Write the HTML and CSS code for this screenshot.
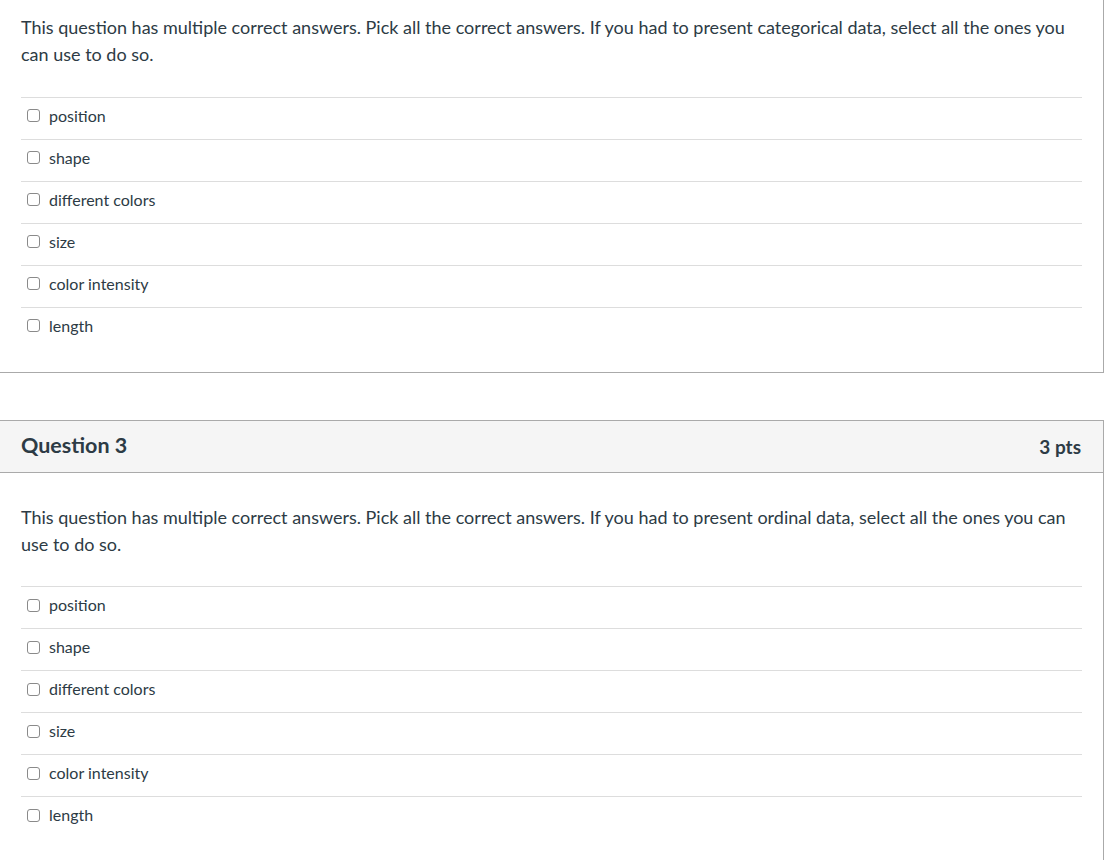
FILE: index.html
```html
<!DOCTYPE html>
<html lang="en">
<head>
<meta charset="utf-8">
<title>Quiz</title>
<link rel="stylesheet" href="styles.css">
</head>
<body>
<div class="page">
  <section class="question question--continued">
    <div class="question-body">
      <p class="question-text">This question has multiple correct answers. Pick all the correct answers. If you had to present categorical data, select all the ones you can use to do so.</p>
      <ul class="answers">
        <li class="answer"><span class="box"></span><span class="label">position</span></li>
        <li class="answer"><span class="box"></span><span class="label">shape</span></li>
        <li class="answer"><span class="box"></span><span class="label">different colors</span></li>
        <li class="answer"><span class="box"></span><span class="label">size</span></li>
        <li class="answer"><span class="box"></span><span class="label">color intensity</span></li>
        <li class="answer"><span class="box"></span><span class="label">length</span></li>
      </ul>
    </div>
  </section>

  <section class="question">
    <header class="question-header">
      <h2 class="question-name">Question 3</h2>
      <span class="question-points">3 pts</span>
    </header>
    <div class="question-body">
      <p class="question-text">This question has multiple correct answers. Pick all the correct answers. If you had to present ordinal data, select all the ones you can use to do so.</p>
      <ul class="answers">
        <li class="answer"><span class="box"></span><span class="label">position</span></li>
        <li class="answer"><span class="box"></span><span class="label">shape</span></li>
        <li class="answer"><span class="box"></span><span class="label">different colors</span></li>
        <li class="answer"><span class="box"></span><span class="label">size</span></li>
        <li class="answer"><span class="box"></span><span class="label">color intensity</span></li>
        <li class="answer"><span class="box"></span><span class="label">length</span></li>
      </ul>
    </div>
  </section>
</div>
</body>
</html>
```

FILE: styles.css
```css
* { box-sizing: border-box; }
html, body { margin: 0; padding: 0; background: #fff; }
body {
  font-family: Lato, "Open Sans", "Liberation Sans", sans-serif;
  color: #2d3b45;
  font-size: 18px;
}
.page {
  width: 1105px;
  margin-left: -1px;
  display: flex;
  flex-direction: column;
  gap: 47px;
}
.question {
  border: 1px solid #aaaaaa;
}
.question--continued {
  border-top: none;
}
.question-header {
  display: flex;
  align-items: center;
  justify-content: space-between;
  height: 52px;
  background: #f5f5f5;
  border-bottom: 1px solid #aaaaaa;
  padding: 0 22px 0 21px;
}
.question-name {
  margin: 0;
  font-size: 21.5px;
  font-weight: 700;
  line-height: 1;
  padding-bottom: 1px;
}
.question-points {
  font-size: 19px;
  font-weight: 700;
  line-height: 1;
  padding-top: 1px;
}
.question-body {
  padding: 31px 21px 23px 21px;
}
.question--continued .question-body {
  padding-top: 14px;
}
.question-text {
  margin: 0 0 28.5px 0;
  line-height: 27px;
}
.answers {
  list-style: none;
  margin: 0;
  padding: 0;
}
.answer {
  display: flex;
  align-items: center;
  gap: 9px;
  border-top: 1px solid #dddddd;
  padding: 8px 0 13px 6px;
  line-height: 20px;
  font-size: 16px;
}
.box {
  width: 13px;
  height: 13px;
  border: 1.5px solid #8a8a8a;
  border-radius: 3px;
  background: #fff;
  flex: none;
}
```
